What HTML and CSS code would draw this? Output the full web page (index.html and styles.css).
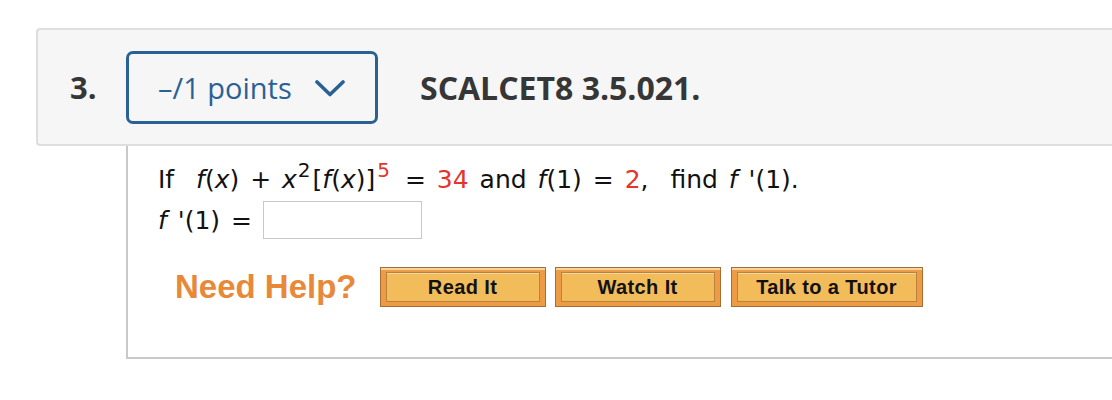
FILE: index.html
```html
<!DOCTYPE html>
<html>
<head>
<meta charset="utf-8">
<link rel="stylesheet" href="styles.css">
</head>
<body>
<div class="question">
  <div class="qhead">
    <div class="qnum">3.</div>
    <div class="points">
      <span class="points-text">–/1 points</span>
      <svg class="chev" width="30" height="17" viewBox="0 0 30 17"><polyline points="2,2 15,14.5 28,2" fill="none" stroke="#2a6195" stroke-width="3.6" stroke-linecap="round" stroke-linejoin="round"/></svg>
    </div>
    <div class="qtitle">SCALCET8 3.5.021.</div>
  </div>
  <div class="qbody">
    <div class="line1">If&nbsp; <i>f</i>(<i>x</i>) + <i>x</i><sup>2</sup>[<i>f</i>(<i>x</i>)]<sup class="red">5</sup> = <span class="red">34</span> and <i>f</i>(1) = <span class="red">2</span>,&nbsp; find <i>f</i> '(1).</div>
    <div class="line2"><span><i>f</i> '(1) =</span><span class="answer"></span></div>
    <div class="help">
      <span class="need">Need Help?</span>
      <span class="btn w1"><span class="btn-in">Read It</span></span>
      <span class="btn w1"><span class="btn-in">Watch It</span></span>
      <span class="btn w2"><span class="btn-in">Talk to a Tutor</span></span>
    </div>
  </div>
</div>
</body>
</html>
```
FILE: styles.css
```css
html, body { background: #fff; }
body {
  margin: 0;
  padding: 28px 0 0 36px;
  font-family: "Open Sans", "DejaVu Sans", sans-serif;
}
.qhead {
  display: flex;
  align-items: center;
  height: 118px;
  box-sizing: border-box;
  border: 2px solid #dedede;
  border-right: none;
  border-radius: 4px 0 0 4px;
  background: #f6f6f6;
  padding-left: 32px;
}
.qnum {
  width: 56px;
  font-size: 31px;
  font-weight: 700;
  color: #363636;
}
.points {
  width: 252px;
  height: 73px;
  box-sizing: border-box;
  border: 3px solid #2a6195;
  border-radius: 7px;
  display: flex;
  align-items: center;
  padding-left: 29px;
  gap: 23px;
  color: #2a6195;
}
.points-text { font-size: 29px; }
.chev { display: block; margin-top: 2px; }
.qtitle {
  margin-left: 42px;
  font-size: 32px;
  font-weight: 700;
  color: #363636;
}
.qbody {
  margin-left: 90px;
  height: 213px;
  box-sizing: border-box;
  border-left: 2px solid #c9c9c9;
  border-bottom: 2px solid #c9c9c9;
  padding: 19px 0 0 30px;
  font-family: "DejaVu Sans", Verdana, sans-serif;
  font-size: 25px;
  color: #111;
}
.line1 {
  line-height: 30px;
  word-spacing: 3px;
  white-space: nowrap;
}
.line1 i, .line2 i { font-style: italic; }
sup {
  font-size: 20px;
  vertical-align: 11px;
  line-height: 0;
  margin: 0 2px 0 1px;
}
.red { color: #e5352b; }
sup.red { margin: 0 4px 0 2px; }
.line2 {
  display: flex;
  align-items: center;
  gap: 11px;
  margin-top: 6px;
  word-spacing: 3px;
}
.answer {
  display: block;
  width: 159px;
  height: 38px;
  box-sizing: border-box;
  border: 1px solid #c8c8c8;
  background: #fff;
}
.help {
  display: flex;
  align-items: center;
  margin: 28px 0 0 17px;
  font-family: "Liberation Sans", Arial, sans-serif;
}
.need {
  font-size: 33px;
  font-weight: 700;
  color: #e8893a;
  margin-right: 23px;
}
.btn {
  display: flex;
  height: 40px;
  box-sizing: border-box;
  border: 1px solid #a66f34;
  background: #ee9b45;
  box-shadow: inset 0 2px 0 #f7d3a0;
  padding: 4px 5px 4px 5px;
  margin-right: 9px;
}
.w1 { width: 166px; }
.w2 { width: 192px; margin-left: 1px; }
.btn-in {
  flex: 1;
  display: flex;
  align-items: center;
  justify-content: center;
  border: 1px solid #b9823f;
  background: #f3bc5b;
  box-shadow: inset 0 1px 0 #f8d89a;
  font-size: 20px;
  font-weight: 700;
  letter-spacing: 0.4px;
  color: #121212;
}
```
